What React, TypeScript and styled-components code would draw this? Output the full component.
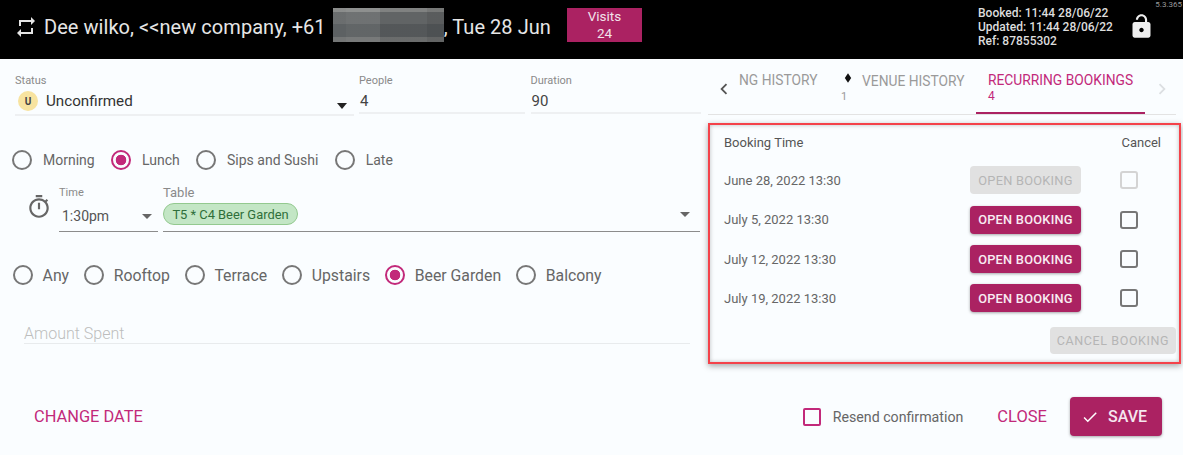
import React, { FC } from "react";
import styled, { createGlobalStyle } from "styled-components";

const brand = "#ab2262";
const brandText = "#c2297a";

const GlobalStyle = createGlobalStyle`
  html, body {
    margin: 0;
    padding: 0;
    background: #fafdff;
    font-family: Roboto, "Liberation Sans", sans-serif;
  }
  * {
    box-sizing: border-box;
  }
`;

const Glyph: FC<{ d: string; size: number; color: string; className?: string }> = ({ d, size, color, className }) => (
  <svg className={className} width={size} height={size} viewBox="0 0 24 24" fill={color} fillRule="evenodd">
    <path d={d} />
  </svg>
);

const icons = {
  repeat: "M7 7h10v3l4-4-4-4v3H5v6h2V7zm10 10H7v-3l-4 4 4 4v-3h12v-6h-2v4z",
  timer:
    "M15 1H9v2h6V1zm-4 13h2V8h-2v6zm8.03-6.61l1.42-1.42c-.43-.51-.9-.99-1.41-1.41l-1.42 1.42C16.07 4.74 14.12 4 12 4c-4.97 0-9 4.03-9 9s4.02 9 9 9 9-4.03 9-9c0-2.12-.74-4.07-1.97-5.61zM12 20c-3.87 0-7-3.13-7-7s3.13-7 7-7 7 3.13 7 7-3.13 7-7 7z",
  lock: "M12 1C9.24 1 7 3.24 7 6h1.9c0-1.71 1.39-3.1 3.1-3.1s3.1 1.39 3.1 3.1v2H6c-1.1 0-2 .9-2 2v10c0 1.1.9 2 2 2h12c1.1 0 2-.9 2-2V10c0-1.1-.9-2-2-2h-1V6c0-2.76-2.24-5-5-5zM12 17c-1.1 0-2-.9-2-2s.9-2 2-2 2 .9 2 2-.9 2-2 2z",
  check: "M9 16.17L4.83 12l-1.42 1.41L9 19 21 7l-1.41-1.41z",
  left: "M15.41 7.41L14 6l-6 6 6 6 1.41-1.41L10.83 12z",
  right: "M10 6L8.59 7.41 13.17 12l-4.58 4.59L10 18l6-6z",
};

const App: FC = () => {
  const sessions = ["Morning", "Lunch", "Sips and Sushi", "Late"];
  const areas = ["Any", "Rooftop", "Terrace", "Upstairs", "Beer Garden", "Balcony"];
  const bookings = ["June 28, 2022 13:30", "July 5, 2022 13:30", "July 12, 2022 13:30", "July 19, 2022 13:30"];

  return (
    <Page>
      <GlobalStyle />
      <Header>
        <Glyph d={icons.repeat} size={24} color="#e4e4e4" />
        <Title>
          Dee wilko, &lt;&lt;new company, +61 <Blurred />, Tue 28 Jun
        </Title>
        <Visits>
          <span>Visits</span>
          <span>24</span>
        </Visits>
        <Meta>
          <span>Booked: 11:44 28/06/22</span>
          <span>Updated: 11:44 28/06/22</span>
          <span>Ref: 87855302</span>
        </Meta>
        <Glyph d={icons.lock} size={27} color="#eeeeee" />
        <Version>5.3.365</Version>
      </Header>

      <Main>
        <LeftColumn>
          <TopFields>
            <Field>
              <SmallLabel>Status</SmallLabel>
              <StatusValue>
                <Avatar>U</Avatar>
                Unconfirmed
                <BlackArrow />
              </StatusValue>
            </Field>
            <Field>
              <SmallLabel>People</SmallLabel>
              <PlainValue>4</PlainValue>
            </Field>
            <Field>
              <SmallLabel>Duration</SmallLabel>
              <PlainValue>90</PlainValue>
            </Field>
          </TopFields>

          <SessionRow>
            {sessions.map((s) => (
              <RadioItem key={s}>
                <Radio $on={s === "Lunch"} />
                <SessionLabel>{s}</SessionLabel>
              </RadioItem>
            ))}
          </SessionRow>

          <TimeRow>
            <TimerIcon d={icons.timer} size={26} color="#666" />
            <TimeField>
              <SmallLabel>Time</SmallLabel>
              <TimeValue>
                1:30pm
                <GreyArrow />
              </TimeValue>
            </TimeField>
            <TableField>
              <TableLabel>Table</TableLabel>
              <TableValue>
                <Chip>T5 * C4 Beer Garden</Chip>
                <GreyArrow />
              </TableValue>
            </TableField>
          </TimeRow>

          <AreaRow>
            {areas.map((a) => (
              <AreaItem key={a}>
                <Radio $on={a === "Beer Garden"} />
                <AreaLabel>{a}</AreaLabel>
              </AreaItem>
            ))}
          </AreaRow>

          <Amount>Amount Spent</Amount>
        </LeftColumn>

        <RightColumn>
          <Tabs>
            <TabArrow>
              <Glyph d={icons.left} size={22} color="#555" />
            </TabArrow>
            <HistoryTab>NG HISTORY</HistoryTab>
            <VenueTab>
              <VenueTop>
                <Diamond viewBox="0 0 10 12">
                  <path d="M5 0l4 6-4 6-4-6z" fill="#111" />
                </Diamond>
                VENUE HISTORY
              </VenueTop>
              <TabCount>1</TabCount>
            </VenueTab>
            <ActiveTab>
              RECURRING BOOKINGS
              <ActiveCount>4</ActiveCount>
            </ActiveTab>
            <NextArrow>
              <Glyph d={icons.right} size={22} color="#dcdfe2" />
            </NextArrow>
          </Tabs>

          <Panel>
            <PanelHead>
              <span>Booking Time</span>
              <span>Cancel</span>
            </PanelHead>
            {bookings.map((b, i) => (
              <BookingRow key={b}>
                <BookingDate>{b}</BookingDate>
                <OpenButton $disabled={i === 0}>OPEN BOOKING</OpenButton>
                <CheckBox $disabled={i === 0} />
              </BookingRow>
            ))}
            <CancelBooking>CANCEL BOOKING</CancelBooking>
          </Panel>
        </RightColumn>
      </Main>

      <Footer>
        <ChangeDate>CHANGE DATE</ChangeDate>
        <FooterActions>
          <Resend>
            <ResendBox />
            Resend confirmation
          </Resend>
          <Close>CLOSE</Close>
          <Save>
            <Glyph d={icons.check} size={18} color="#fff" />
            SAVE
          </Save>
        </FooterActions>
      </Footer>
    </Page>
  );
};

export default App;

const Page = styled.div`
  width: 1183px;
  height: 455px;
  overflow: hidden;
  background: #fafdff;
`;

const Header = styled.header`
  position: relative;
  display: flex;
  align-items: center;
  height: 59px;
  padding: 0 0 6px 14px;
  background: #000;
  color: #e6e6e6;
`;

const Title = styled.div`
  display: flex;
  align-items: center;
  margin-left: 6px;
  font-size: 20px;
  letter-spacing: 0.05px;
  white-space: pre;
  width: 523px;
`;

const Blurred = styled.span`
  display: inline-block;
  width: 111px;
  height: 34px;
  margin: -3px 0 0 2px;
  background:
    linear-gradient(90deg, rgba(255,255,255,0.03) 0 12%, rgba(255,255,255,0.06) 12% 42%, rgba(0,0,0,0.05) 42% 85%, rgba(0,0,0,0.12) 85% 100%),
    linear-gradient(180deg, #878988 0 4px, #66696a 4px 16px, #585c5e 16px 29px, #707272 29px 34px);
`;

const Visits = styled.div`
  display: flex;
  flex-direction: column;
  align-items: center;
  justify-content: center;
  width: 75px;
  height: 34px;
  margin-top: -3px;
  background: ${brand};
  color: #f2e2ea;
  font-size: 13.5px;
  line-height: 17px;
`;

const Meta = styled.div`
  display: flex;
  flex-direction: column;
  margin-left: 336px;
  width: 150px;
  font-size: 12px;
  line-height: 14px;
  font-weight: 500;
  color: #dddddd;
`;

const Version = styled.span`
  position: absolute;
  top: 0;
  right: 1px;
  font-size: 8px;
  line-height: 9px;
  color: #999;
`;

const Main = styled.div`
  display: flex;
  height: 320px;
`;

const LeftColumn = styled.div`
  display: flex;
  flex-direction: column;
  width: 708px;
`;

const TopFields = styled.div`
  display: grid;
  grid-template-columns: 338.5px 166px 170px;
  column-gap: 5.5px;
  margin: 15px 0 0 15px;
`;

const Field = styled.div`
  display: flex;
  flex-direction: column;
`;

const SmallLabel = styled.label`
  font-size: 11px;
  line-height: 13px;
  color: #8a8a8a;
`;

const StatusValue = styled.div`
  position: relative;
  display: flex;
  align-items: center;
  gap: 8px;
  height: 29px;
  padding: 1px 0 0 3px;
  border-bottom: 2px solid #eef0f2;
  font-size: 15.2px;
  color: #333;
`;

const Avatar = styled.span`
  display: flex;
  align-items: center;
  justify-content: center;
  width: 20px;
  height: 20px;
  border-radius: 50%;
  background: #f7e3a0;
  font-size: 10px;
  font-weight: 700;
  color: #444;
`;

const BlackArrow = styled.span`
  position: absolute;
  right: 7px;
  top: 16px;
  border-left: 5px solid transparent;
  border-right: 5px solid transparent;
  border-top: 6px solid #222;
`;

const PlainValue = styled.div`
  display: flex;
  align-items: center;
  height: 27px;
  padding: 2px 0 0 1px;
  border-bottom: 2px solid #eef0f2;
  font-size: 15px;
  color: #444;
`;

const SessionRow = styled.div`
  display: flex;
  gap: 16.3px;
  margin: 34px 0 0 12px;
`;

const RadioItem = styled.div`
  display: flex;
  align-items: center;
  gap: 11px;
`;

const AreaItem = styled(RadioItem)`
  gap: 9.6px;
`;

const Radio = styled.span<{ $on?: boolean }>`
  display: block;
  width: 20px;
  height: 20px;
  border-radius: 50%;
  border: 2px solid ${(p) => (p.$on ? brandText : "#777")};
  background: ${(p) => (p.$on ? `radial-gradient(circle, ${brandText} 0 5px, transparent 5.6px)` : "transparent")};
`;

const SessionLabel = styled.span`
  font-size: 14px;
  color: #666;
`;

const AreaLabel = styled.span`
  font-size: 15.8px;
  color: #666;
`;

const TimeRow = styled.div`
  display: flex;
  margin: 12px 0 0 26px;
`;

const TimerIcon = styled(Glyph)`
  margin-top: 12px;
  margin-right: 7px;
`;

const TimeField = styled.div`
  display: flex;
  flex-direction: column;
  width: 99px;
  padding-top: 4px;
`;

const TimeValue = styled.div`
  display: flex;
  align-items: center;
  justify-content: space-between;
  height: 33px;
  padding: 2px 6px 0 3px;
  border-bottom: 1px solid #8c8c8c;
  font-size: 14px;
  color: #555;
`;

const GreyArrow = styled.span`
  border-left: 5px solid transparent;
  border-right: 5px solid transparent;
  border-top: 5px solid #666;
`;

const TableField = styled.div`
  display: flex;
  flex-direction: column;
  width: 537px;
  margin-left: 5px;
  padding-top: 4px;
`;

const TableLabel = styled.span`
  font-size: 13px;
  line-height: 14px;
  color: #8a8a8a;
`;

const TableValue = styled.div`
  display: flex;
  align-items: flex-start;
  justify-content: space-between;
  height: 32px;
  padding: 3px 10px 0 0;
  border-bottom: 1px solid #8c8c8c;

  ${GreyArrow} {
    margin-top: 9px;
  }
`;

const Chip = styled.span`
  display: flex;
  align-items: center;
  height: 22px;
  width: 135px;
  justify-content: center;
  border-radius: 11px;
  border: 1px solid #93c98f;
  background: #c3e6c5;
  font-size: 12.9px;
  white-space: nowrap;
  color: #2f6f3a;
`;

const AreaRow = styled.div`
  display: flex;
  gap: 15px;
  margin: 33px 0 0 13px;
`;

const Amount = styled.div`
  margin: 39px 0 0 24px;
  width: 666px;
  height: 20px;
  border-bottom: 1px solid #e8ebed;
  font-size: 16px;
  font-weight: 300;
  line-height: 20px;
  color: #bdbdbd;
`;

const RightColumn = styled.div`
  display: flex;
  flex-direction: column;
  width: 473px;
`;

const Tabs = styled.div`
  display: flex;
  height: 56px;
  margin-right: 5px;
  border-bottom: 1px solid #e3e3e3;
  font-size: 13.8px;
`;

const TabArrow = styled.div`
  display: flex;
  align-items: center;
  justify-content: center;
  width: 22px;
  height: 50px;
  margin: 5px 0 0 5px;
`;

const NextArrow = styled(TabArrow)`
  margin-left: 6px;
`;

const HistoryTab = styled.div`
  width: 105px;
  padding: 13px 0 0 4px;
  color: #9a9a9a;
`;

const VenueTab = styled.div`
  width: 137px;
  padding-top: 13px;
  color: #9a9a9a;
`;

const VenueTop = styled.div`
  display: flex;
  align-items: center;
  line-height: 18px;
  margin-left: 4px;
`;

const Diamond = styled.svg`
  width: 8px;
  height: 10px;
  margin: -6px 10px 0 0;
`;

const TabCount = styled.div`
  margin-left: 1px;
  font-size: 11px;
  line-height: 14px;
  margin-top: 0;
`;

const ActiveTab = styled.div`
  width: 169px;
  margin-left: -1px;
  padding: 13px 0 0 12px;
  height: 55px;
  border-bottom: 2px solid ${brand};
  color: ${brandText};
  line-height: 16px;
`;

const ActiveCount = styled.div`
  font-size: 12px;
  line-height: 16px;
`;

const Panel = styled.section`
  position: relative;
  display: flex;
  flex-direction: column;
  height: 241px;
  margin-top: 8px;
  padding: 8px 3px 0 14px;
  border: 2px solid #f4424a;
  box-shadow: 0 2px 6px rgba(0, 0, 0, 0.35), inset 0 0 4px rgba(0, 0, 0, 0.25);
`;

const PanelHead = styled.div`
  display: flex;
  justify-content: space-between;
  align-items: center;
  height: 18px;
  margin-bottom: 9.6px;
  padding-right: 15px;
  font-size: 13px;
  color: #555;
`;

const BookingRow = styled.div`
  display: flex;
  align-items: center;
  height: 39.4px;
`;

const BookingDate = styled.span`
  width: 246px;
  font-size: 13px;
  color: #666;
`;

const OpenButton = styled.button<{ $disabled?: boolean }>`
  width: 111px;
  height: 28px;
  padding: 0;
  border: 0;
  border-radius: 4px;
  font-family: inherit;
  font-size: 12.8px;
  letter-spacing: 0.25px;
  white-space: nowrap;
  font-weight: ${(p) => (p.$disabled ? 400 : 500)};
  background: ${(p) => (p.$disabled ? "#e1e1e1" : brand)};
  color: ${(p) => (p.$disabled ? "#b5b5b5" : "#f8ecf2")};
  box-shadow: ${(p) => (p.$disabled ? "none" : "0 1px 3px rgba(0,0,0,0.35)")};
`;

const CheckBox = styled.span<{ $disabled?: boolean }>`
  display: block;
  width: 18px;
  height: 18px;
  margin-left: 39px;
  border-radius: 3px;
  border: 2px solid ${(p) => (p.$disabled ? "#d4d4d4" : "#777")};
`;

const CancelBooking = styled.button`
  align-self: flex-end;
  width: 126px;
  height: 27px;
  margin-top: 8.4px;
  padding: 0;
  border: 0;
  border-radius: 4px;
  font-family: inherit;
  font-size: 12.5px;
  letter-spacing: 0.6px;
  background: #e1e1e1;
  color: #b5b5b5;
`;

const Footer = styled.footer`
  display: flex;
  align-items: center;
  justify-content: space-between;
  margin-top: 18px;
  height: 39px;
  padding: 0 21px 0 34px;
`;

const ChangeDate = styled.span`
  font-size: 16.4px;
  color: ${brandText};
`;

const FooterActions = styled.div`
  display: flex;
  align-items: center;
`;

const Resend = styled.div`
  display: flex;
  align-items: center;
  gap: 12px;
  font-size: 14.2px;
  color: #666;
`;

const ResendBox = styled.span`
  display: block;
  width: 18px;
  height: 18px;
  border-radius: 2px;
  border: 2px solid ${brandText};
`;

const Close = styled.span`
  margin: 0 23px 0 34px;
  font-size: 16.5px;
  color: ${brandText};
`;

const Save = styled.button`
  display: flex;
  align-items: center;
  gap: 9px;
  width: 92px;
  height: 39px;
  padding: 0 0 0 11px;
  border: 0;
  border-radius: 4px;
  font-family: inherit;
  font-size: 16px;
  font-weight: 500;
  background: ${brand};
  color: #f5e6ee;
  box-shadow: 0 1px 3px rgba(0, 0, 0, 0.35);
`;
